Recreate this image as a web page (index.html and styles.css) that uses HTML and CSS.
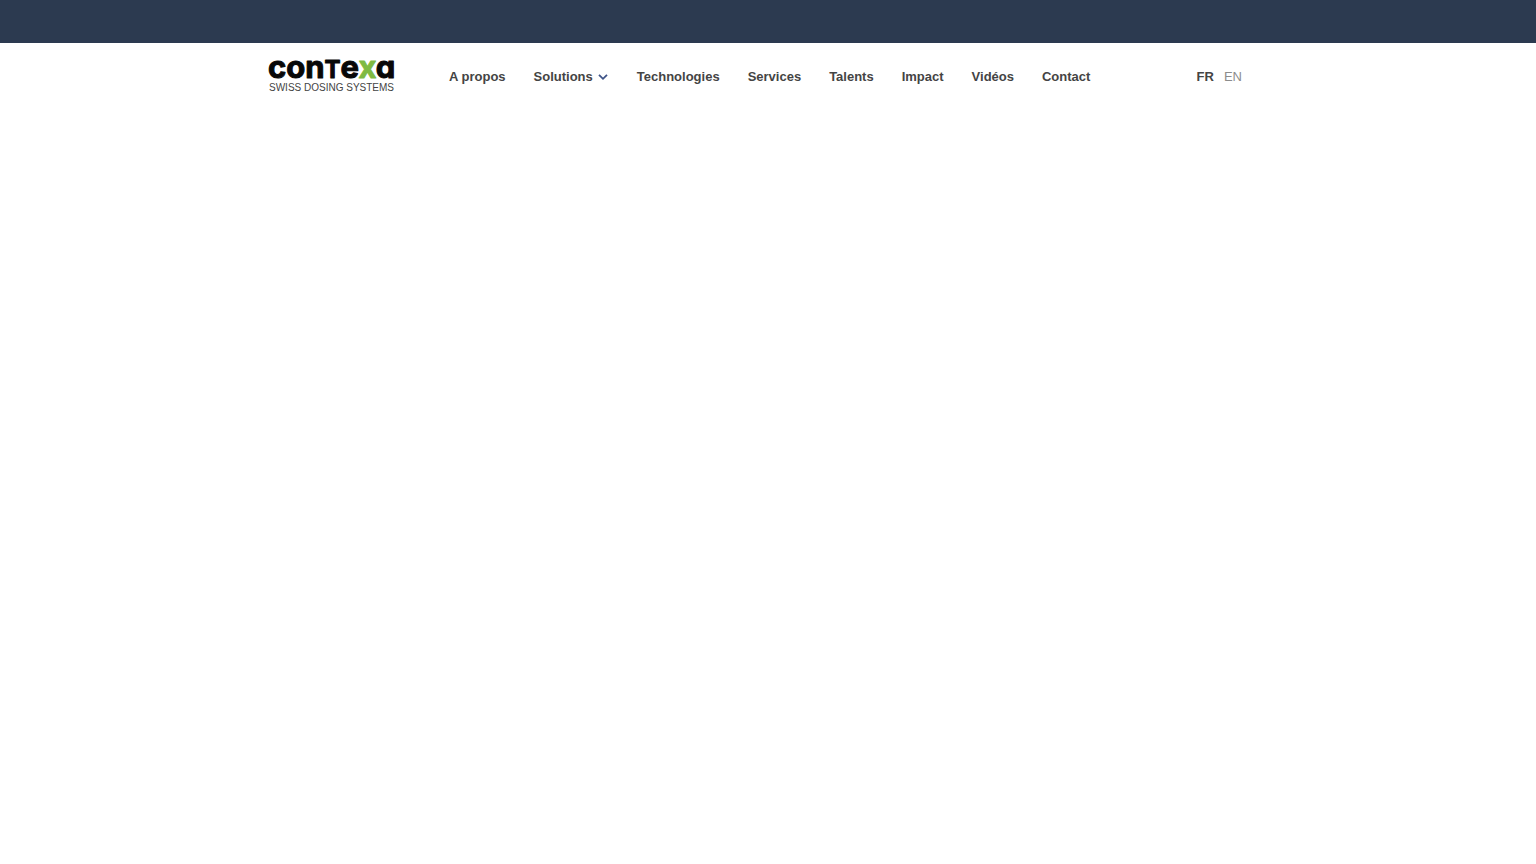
FILE: index.html
```html
<!DOCTYPE html>
<html lang="fr">
<head>
<meta charset="utf-8">
<title>Contexa – Swiss Dosing Systems</title>
<link rel="stylesheet" href="styles.css">
</head>
<body>
<div class="topbar"></div>
<header class="header">
  <a class="logo" href="#">
    <svg class="logo-mark" viewBox="0 0 130 34">
      <text class="wordmark" x="0" y="18">con<tspan class="wordmark-t">T</tspan>e<tspan class="wordmark-x">x</tspan>a</text>
      <text class="tagline" x="1" y="31">SWISS DOSING SYSTEMS</text>
    </svg>
  </a>
  <nav class="nav">
    <a href="#">A propos</a>
    <a href="#">Solutions<svg class="chevron" viewBox="0 0 12 8" aria-hidden="true"><path d="M2 1.8 6 5.8 10 1.8"/></svg></a>
    <a href="#">Technologies</a>
    <a href="#">Services</a>
    <a href="#">Talents</a>
    <a href="#">Impact</a>
    <a href="#">Vidéos</a>
    <a href="#">Contact</a>
  </nav>
  <div class="languages">
    <a class="current" href="#">FR</a>
    <a href="#">EN</a>
  </div>
</header>
<main></main>
</body>
</html>
```
FILE: styles.css
```css
body {
  margin: 0;
  background: #fff;
  color: #444;
  font: 13px/20px "Liberation Sans", Arial, sans-serif;
}
a {
  color: inherit;
  text-decoration: none;
}
.topbar {
  height: 43px;
  background: #2c3a50;
}
.header {
  display: flex;
  align-items: center;
  max-width: 1000px;
  margin: 0 auto;
  height: 67px;
}
.logo-mark {
  display: block;
  width: 130px;
  height: 34px;
  overflow: visible;
}
.wordmark {
  font: 700 31px Inter, sans-serif;
  font-feature-settings: "cv11";
  fill: #080808;
  stroke: #080808;
  stroke-width: 1px;
  stroke-linejoin: round;
}
.wordmark-t {
  font-size: 24px;
}
.wordmark-x {
  fill: #7fba42;
  stroke: #7fba42;
}
.tagline {
  font-size: 10px;
  fill: #444;
}
.nav {
  display: flex;
  gap: 28px;
  margin-left: 51px;
  font-weight: 700;
}
.chevron {
  width: 12px;
  height: 8px;
  margin-left: 4px;
  fill: none;
  stroke: #3f5488;
  stroke-width: 1.8;
}
.languages {
  display: flex;
  gap: 10px;
  margin-left: auto;
  margin-right: 26px;
  color: #8c8c8c;
}
.current {
  color: #444;
  font-weight: 700;
}
```
